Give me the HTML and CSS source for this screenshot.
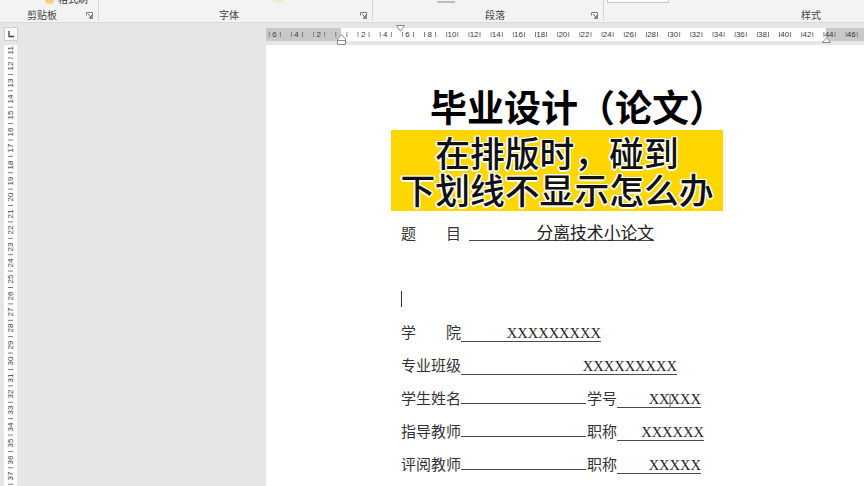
FILE: index.html
```html
<!DOCTYPE html>
<html lang="zh-CN">
<head>
<meta charset="utf-8">
<title>毕业设计（论文）</title>
<link rel="stylesheet" href="styles.css">
</head>
<body>
<div class="ribbon">
  <div class="grp g1">
    <div class="strip">
      <span class="painter"></span><span class="cut">格式刷</span>
    </div>
    <div class="lblrow"><span class="lbl">剪贴板</span>
      <svg class="launch" width="7" height="7" viewBox="0 0 7 7"><path d="M0.5 3.5V0.5H6.5V6.5H3.5" fill="none" stroke="#808080"/><path d="M2 2L5.2 5.2M5.5 3V5.5H3" fill="none" stroke="#808080"/></svg>
    </div>
  </div>
  <div class="grp g2">
    <div class="strip"><span class="hl"></span></div>
    <div class="lblrow"><span class="lbl">字体</span>
      <svg class="launch" width="7" height="7" viewBox="0 0 7 7"><path d="M0.5 3.5V0.5H6.5V6.5H3.5" fill="none" stroke="#808080"/><path d="M2 2L5.2 5.2M5.5 3V5.5H3" fill="none" stroke="#808080"/></svg>
    </div>
  </div>
  <div class="grp g3">
    <div class="strip"><span class="bar"></span></div>
    <div class="lblrow"><span class="lbl">段落</span>
      <svg class="launch" width="7" height="7" viewBox="0 0 7 7"><path d="M0.5 3.5V0.5H6.5V6.5H3.5" fill="none" stroke="#808080"/><path d="M2 2L5.2 5.2M5.5 3V5.5H3" fill="none" stroke="#808080"/></svg>
    </div>
  </div>
  <div class="grp g4">
    <div class="strip"><span class="gal"></span></div>
    <div class="lblrow"><span class="lbl">样式</span></div>
  </div>
</div>

<div class="rulerbar">
  <div class="tabsel">
    <svg width="8" height="8" viewBox="0 0 8 8"><path d="M2 1V6.5H7" fill="none" stroke="#444" stroke-width="1.3"/></svg>
  </div>
  <div class="hruler">
    <div class="nums">
      <span>6</span><span>4</span><span>2</span><span></span><span>2</span><span>4</span><span>6</span><span>8</span><span>10</span><span>12</span><span>14</span><span>16</span><span>18</span><span>20</span><span>22</span><span>24</span><span>26</span><span>28</span><span>30</span><span>32</span><span>34</span><span>36</span><span>38</span><span>40</span><span>42</span><span>44</span><span>46</span>
    </div>
    <svg class="mk mk-first" width="9" height="7" viewBox="0 0 9 7"><path d="M0.5 0.5H8.5L4.5 6.3Z" fill="#fff" stroke="#8a8a8a"/></svg>
    <svg class="mk mk-hang" width="9" height="11" viewBox="0 0 9 11"><path d="M4.5 0.6L8.5 5V10.5H0.5V5Z" fill="#fff" stroke="#8a8a8a"/><path d="M0.5 6.5H8.5" stroke="#8a8a8a"/></svg>
    <svg class="mk mk-right" width="9" height="6" viewBox="0 0 9 6"><path d="M4.5 0.6L8.5 5.5H0.5Z" fill="#fff" stroke="#8a8a8a"/></svg>
  </div>
</div>

<div class="main">
  <div class="vruler">
    <div class="vnums">
      <span>11</span><span>12</span><span>13</span><span>14</span><span>15</span><span>16</span><span>17</span><span>18</span><span>19</span><span>20</span><span>21</span><span>22</span><span>23</span><span>24</span><span>25</span><span>26</span><span>27</span><span>28</span><span>29</span><span>30</span><span>31</span><span>32</span><span>33</span><span>34</span><span>35</span><span>36</span><span>37</span>
    </div>
  </div>
  <div class="page">
    <div class="title">毕业设计（论文）</div>
    <div class="caption">
      <div class="cap-line">在排版时，碰到</div>
      <div class="cap-line">下划线不显示怎么办</div>
    </div>
    <div class="row">
      <span class="label two">题目</span>
      <span class="fill w185 sans gap">分离技术小论文</span>
    </div>
    <div class="row"></div>
    <div class="row"><span class="caret"></span></div>
    <div class="row">
      <span class="label two">学院</span>
      <span class="fill w140">XXXXXXXXX</span>
    </div>
    <div class="row">
      <span class="label">专业班级</span>
      <span class="fill w216">XXXXXXXXX</span>
    </div>
    <div class="row">
      <span class="label">学生姓名</span>
      <span class="fill w125"></span>
      <span class="label2">学号</span>
      <span class="fill w84">XX<span class="ibeam"><svg width="6" height="14" viewBox="0 0 6 14"><path d="M0.5 0.5H2.3M3.7 0.5H5.5M3 1V13M0.5 13.5H2.3M3.7 13.5H5.5" fill="none" stroke="#555" stroke-width="1"/></svg></span>XXX</span>
    </div>
    <div class="row">
      <span class="label">指导教师</span>
      <span class="fill w125"></span>
      <span class="label2">职称</span>
      <span class="fill w87">XXXXXX</span>
    </div>
    <div class="row">
      <span class="label">评阅教师</span>
      <span class="fill w125"></span>
      <span class="label2">职称</span>
      <span class="fill w84">XXXXX</span>
    </div>
  </div>
</div>
</body>
</html>
```

FILE: styles.css
```css
* { box-sizing: border-box; }
html, body { margin: 0; padding: 0; }
body {
  width: 864px;
  height: 486px;
  overflow: hidden;
  background: #e6e6e6;
  font-family: "Noto Sans CJK SC", "Liberation Sans", sans-serif;
  color: #333;
}

/* ribbon */
.ribbon {
  display: flex;
  height: 23px;
  background: #f3f3f3;
  border-bottom: 1px solid #d9d9d9;
}
.grp {
  display: flex;
  flex-direction: column;
  height: 21px;
  border-right: 1px solid #d6d6d6;
  overflow: hidden;
}
.g1 { width: 99px; }
.g2 { width: 274px; }
.g3 { width: 231px; }
.g4 { flex: 1; border-right: none; }
.strip {
  height: 9px;
  display: flex;
  align-items: flex-start;
  overflow: hidden;
}
.g1 .strip { padding-left: 45px; }
.painter {
  width: 9px;
  height: 4px;
  background: #f2d27a;
  border-radius: 0 0 4px 4px;
}
.cut {
  font-size: 10px;
  line-height: 12px;
  margin-top: -7px;
  margin-left: 4px;
  color: #333;
}
.g2 .strip { padding-left: 174px; }
.hl {
  width: 10px;
  height: 2px;
  background: #f4e9c4;
  border-radius: 0 0 4px 4px;
}
.g3 .strip { padding-left: 64px; }
.bar {
  width: 18px;
  height: 2px;
  margin-top: 1px;
  background: #bdbdbd;
}
.g4 .strip { padding-left: 3px; }
.gal {
  width: 62px;
  height: 3px;
  border: 1px solid #c9c9c9;
  border-top: none;
  background: #fbfbfb;
}
.lblrow {
  height: 12px;
  display: flex;
  align-items: center;
}
.lbl {
  font-size: 10px;
  line-height: 12px;
  color: #444;
}
.g1 .lbl { margin-left: 27px; }
.g2 .lbl { margin-left: 120px; }
.g3 .lbl { margin-left: 112px; }
.g4 .lbl { margin-left: 197px; }
.launch { margin-left: auto; margin-right: 5px; margin-top: 1px; }

/* ruler bar */
.rulerbar {
  display: flex;
  height: 22px;
  padding-top: 4px;
}
.tabsel {
  width: 14px;
  height: 14px;
  margin-left: 4px;
  background: #fafafa;
  border: 1px solid #d0d0d0;
  display: flex;
  align-items: center;
  justify-content: center;
}
.hruler {
  position: relative;
  margin-left: 248px;
  margin-top: 1px;
  width: 598px;
  height: 13px;
  background:
    linear-gradient(to right, transparent 2.35px, #7a7a7a 2.35px, #7a7a7a 3.35px, transparent 3.35px) 0 center / 11.1px 5px repeat-x,
    linear-gradient(to right, #c8c8c8 75px, #ffffff 75px, #ffffff 560px, #c8c8c8 560px);
}
.nums {
  display: flex;
  margin-left: -2.7px;
  overflow: hidden;
  width: 601px;
}
.nums span {
  flex: 0 0 22.2px;
  text-align: center;
  font-family: "Liberation Sans", sans-serif;
  font-size: 8px;
  line-height: 13px;
  color: #3a3a3a;
}
.mk { position: absolute; }
.mk-first { left: 129.5px; top: -3px; }
.mk-hang { left: 70.5px; top: 6px; }
.mk-right { left: 555.5px; top: 9px; }

/* main */
.main {
  display: flex;
  height: 441px;
}
.vruler {
  width: 13px;
  margin-left: 4px;
  background:
    linear-gradient(to bottom, transparent 12.7px, #7a7a7a 12.7px, #7a7a7a 13.7px, transparent 13.7px) 4px 0 / 5px 16.4px repeat-y,
    #ffffff;
  overflow: hidden;
}
.vnums {
  display: flex;
  flex-direction: column;
  margin-top: -3.2px;
}
.vnums span {
  flex: 0 0 16.4px;
  display: flex;
  align-items: center;
  justify-content: center;
  writing-mode: vertical-rl;
  transform: rotate(180deg);
  font-family: "Liberation Sans", sans-serif;
  font-size: 8px;
  color: #3a3a3a;
}
.page {
  flex: 1;
  margin-left: 249px;
  background: #ffffff;
  padding-top: 41px;
  padding-left: 135px;
}
.title {
  margin-left: 29px;
  font-size: 37px;
  line-height: 40px;
  font-weight: 700;
  color: #000;
  white-space: nowrap;
}
.caption {
  margin-top: 4px;
  margin-left: -10px;
  width: 332px;
  height: 81px;
  padding-top: 4px;
  background: #ffd600;
  display: flex;
  flex-direction: column;
  align-items: center;
  font-size: 34.8px;
  font-weight: 500;
  color: #111;
  white-space: nowrap;
  text-shadow:
    -1.2px -1.2px 0 #fff, 1.2px -1.2px 0 #fff, -1.2px 1.2px 0 #fff, 1.2px 1.2px 0 #fff,
    0 -1.5px 0 #fff, 0 1.5px 0 #fff, -1.5px 0 0 #fff, 1.5px 0 0 #fff;
}
.cap-line {
  height: 37px;
  line-height: 37px;
  display: flex;
  align-items: center;
}
.caption + .row { margin-top: 5px; }
.row {
  display: flex;
  align-items: baseline;
  height: 33px;
  line-height: 33px;
  font-size: 15px;
  color: #333;
  white-space: nowrap;
}
.label {
  display: inline-block;
  width: 60px;
}
.label.two {
  text-align: justify;
  text-align-last: justify;
}
.label2 {
  display: inline-block;
  width: 31px;
  padding-left: 1px;
}
.fill {
  display: inline-block;
  position: relative;
  border-bottom: 1px solid #4a4a4a;
  text-align: right;
  font-family: "Liberation Serif", serif;
  font-size: 14.5px;
  line-height: 15px;
  height: 16px;
  color: #1e1e1e;
}
.fill.sans {
  font-family: "Noto Sans CJK SC", sans-serif;
  font-size: 16.8px;
  line-height: 15px;
  color: #222;
}
.fill.gap { margin-left: 8px; }
.w84 { width: 84px; }
.w87 { width: 87px; }
.w125 { width: 125px; }
.w140 { width: 140px; }
.w185 { width: 185px; }
.w216 { width: 216px; }
.caret {
  display: inline-block;
  width: 1px;
  height: 16px;
  background: #333;
  align-self: center;
}
.ibeam {
  position: relative;
  display: inline-block;
  width: 0;
}
.ibeam svg {
  position: absolute;
  left: -3px;
  top: -10px;
}
```
